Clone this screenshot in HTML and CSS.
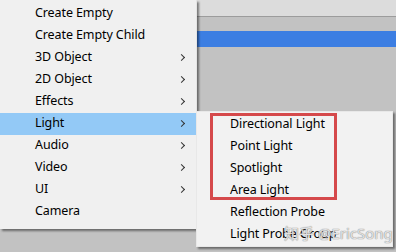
FILE: index.html
```html
<!DOCTYPE html>
<html lang="zh">

<head>
    <meta charset="UTF-8">
    <title>GameObject Menu</title>
    <link rel="stylesheet" href="styles.css">
</head>

<body>
    <!-- 뒤쪽 에디터 화면 -->
    <div class="editor">
        <div class="toolbar"></div>
        <div class="hierarchy">
            <div class="row"></div>
            <div class="row selected"></div>
        </div>
    </div>

    <!-- 메인 메뉴 -->
    <ul class="menu main">
        <li>Create Empty</li>
        <li>Create Empty Child</li>
        <li class="sub">3D Object</li>
        <li class="sub">2D Object</li>
        <li class="sub">Effects</li>
        <li class="sub on">Light</li>
        <li class="sub">Audio</li>
        <li class="sub">Video</li>
        <li class="sub">UI</li>
        <li>Camera</li>
    </ul>

    <!-- Light 서브 메뉴 -->
    <ul class="menu light">
        <li>Directional Light</li>
        <li>Point Light</li>
        <li>Spotlight</li>
        <li>Area Light</li>
        <li>Reflection Probe</li>
        <li>Light Probe Group</li>
    </ul>
    <div class="mark"></div>
    <div class="watermark">知乎 @EricSong</div>
</body>

</html>
```

FILE: styles.css
```css
* {
    margin: 0;
    padding: 0;
    list-style: none;
    box-sizing: border-box;
}

body {
    width: 396px;
    height: 252px;
    overflow: hidden;
    position: relative;
    background-color: #bcbcbc;
    font-family: "Noto Sans", "Noto Sans CJK SC", sans-serif;
    font-size: 12.5px;
    letter-spacing: -0.1px;
    color: #000;
}

.editor {
    height: 252px;
    display: flex;
    flex-direction: column;
}

.toolbar {
    height: 17px;
    background-color: #dcdcdc;
    border-bottom: 1px solid #9c9c9c;
}

.hierarchy {
    flex: 1;
    background-color: #c2c2c2;
}

.row {
    height: 14px;
}

.selected {
    height: 16px;
    background-color: #3c7ee2;
}

.menu {
    position: absolute;
    background-color: #f0f0f0;
    box-shadow: 2px 2px 2px rgba(0, 0, 0, 0.45);
}

.menu li {
    height: 22px;
    line-height: 20px;
    white-space: nowrap;
}

.main {
    top: 0;
    left: 0;
    width: 197px;
    height: 229px;
    padding-top: 3px;
    border-right: 1px solid #e4e4e4;
}

.main li {
    padding-left: 35px;
    position: relative;
}

.main li.sub::after {
    content: "";
    position: absolute;
    top: 8px;
    right: 12px;
    width: 4px;
    height: 4px;
    border-top: 1px solid #333;
    border-right: 1px solid #333;
    transform: rotate(45deg);
}

.main li.on {
    background-color: #93c9f6;
}

.light {
    top: 111px;
    left: 196px;
    width: 197px;
    height: 136px;
    padding-top: 2px;
    background-color: #f2f2f2;
    border: 1px solid #e8e8e8;
}

.light li {
    padding-left: 33px;
}

.mark {
    position: absolute;
    top: 113px;
    left: 210px;
    width: 127px;
    height: 87px;
    border: 3px solid #d5494b;
}

.watermark {
    position: absolute;
    top: 222px;
    left: 284px;
    font-size: 15px;
    letter-spacing: 0;
    color: rgba(255, 255, 255, 0.75);
    text-shadow: 0 0 1px #8a8a8a, 0 0 1px #8a8a8a;
}
```
